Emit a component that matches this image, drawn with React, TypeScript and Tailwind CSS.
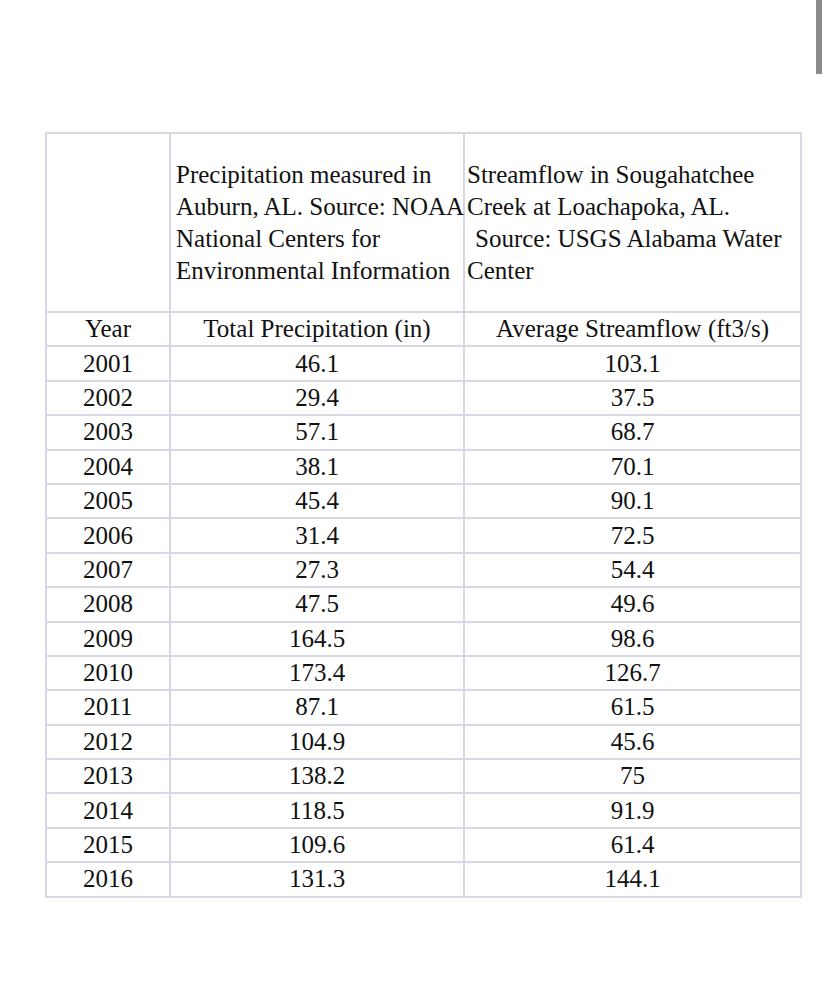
const rows: [string, string, string][] = [
  ["2001", "46.1", "103.1"],
  ["2002", "29.4", "37.5"],
  ["2003", "57.1", "68.7"],
  ["2004", "38.1", "70.1"],
  ["2005", "45.4", "90.1"],
  ["2006", "31.4", "72.5"],
  ["2007", "27.3", "54.4"],
  ["2008", "47.5", "49.6"],
  ["2009", "164.5", "98.6"],
  ["2010", "173.4", "126.7"],
  ["2011", "87.1", "61.5"],
  ["2012", "104.9", "45.6"],
  ["2013", "138.2", "75"],
  ["2014", "118.5", "91.9"],
  ["2015", "109.6", "61.4"],
  ["2016", "131.3", "144.1"],
]

const cell = "border-2 border-[#d7d7e5] text-center align-middle p-0 text-[25px] leading-[28px] font-['Liberation_Serif',serif]"
const head = "border-2 border-[#d7d7e5] align-middle text-left text-[25px] leading-[32px] whitespace-nowrap font-['Liberation_Serif',serif]"

export default function App() {
  return (
    <div className="relative w-[828px] h-[999px] bg-white font-['Liberation_Serif',serif] text-[25px] text-[#111]">
      {/* scroll indicator */}
      <div className="absolute right-[6px] top-0 w-[6px] h-[74px] bg-[#8b8b8b]" />

      <div className="pt-[132px] pl-[45px]">
        <table className="border-collapse w-[757px] table-fixed text-[#111]">
          <colgroup>
            <col className="w-[124px]" />
            <col className="w-[294px]" />
            <col />
          </colgroup>
          <tbody>
            <tr className="h-[179px]">
              <td className={cell}></td>
              <td className={`${head} pl-[5px]`}>
                Precipitation measured in
                <br />
                Auburn, AL. Source: NOAA
                <br />
                National Centers for
                <br />
                Environmental Information
              </td>
              <td className={`${head} pl-[2px]`}>
                Streamflow in Sougahatchee
                <br />
                Creek at Loachapoka, AL.
                <br />
                <span className="pl-[8px]">Source: USGS Alabama Water</span>
                <br />
                Center
              </td>
            </tr>
            <tr className="h-[34.4px]">
              <td className={cell}>Year</td>
              <td className={cell}>Total Precipitation (in)</td>
              <td className={cell}>Average Streamflow (ft3/s)</td>
            </tr>
            {rows.map(([y, p, s]) => (
              <tr key={y} className="h-[34.4px]">
                <td className={cell}>{y}</td>
                <td className={cell}>{p}</td>
                <td className={cell}>{s}</td>
              </tr>
            ))}
          </tbody>
        </table>
      </div>
    </div>
  )
}
